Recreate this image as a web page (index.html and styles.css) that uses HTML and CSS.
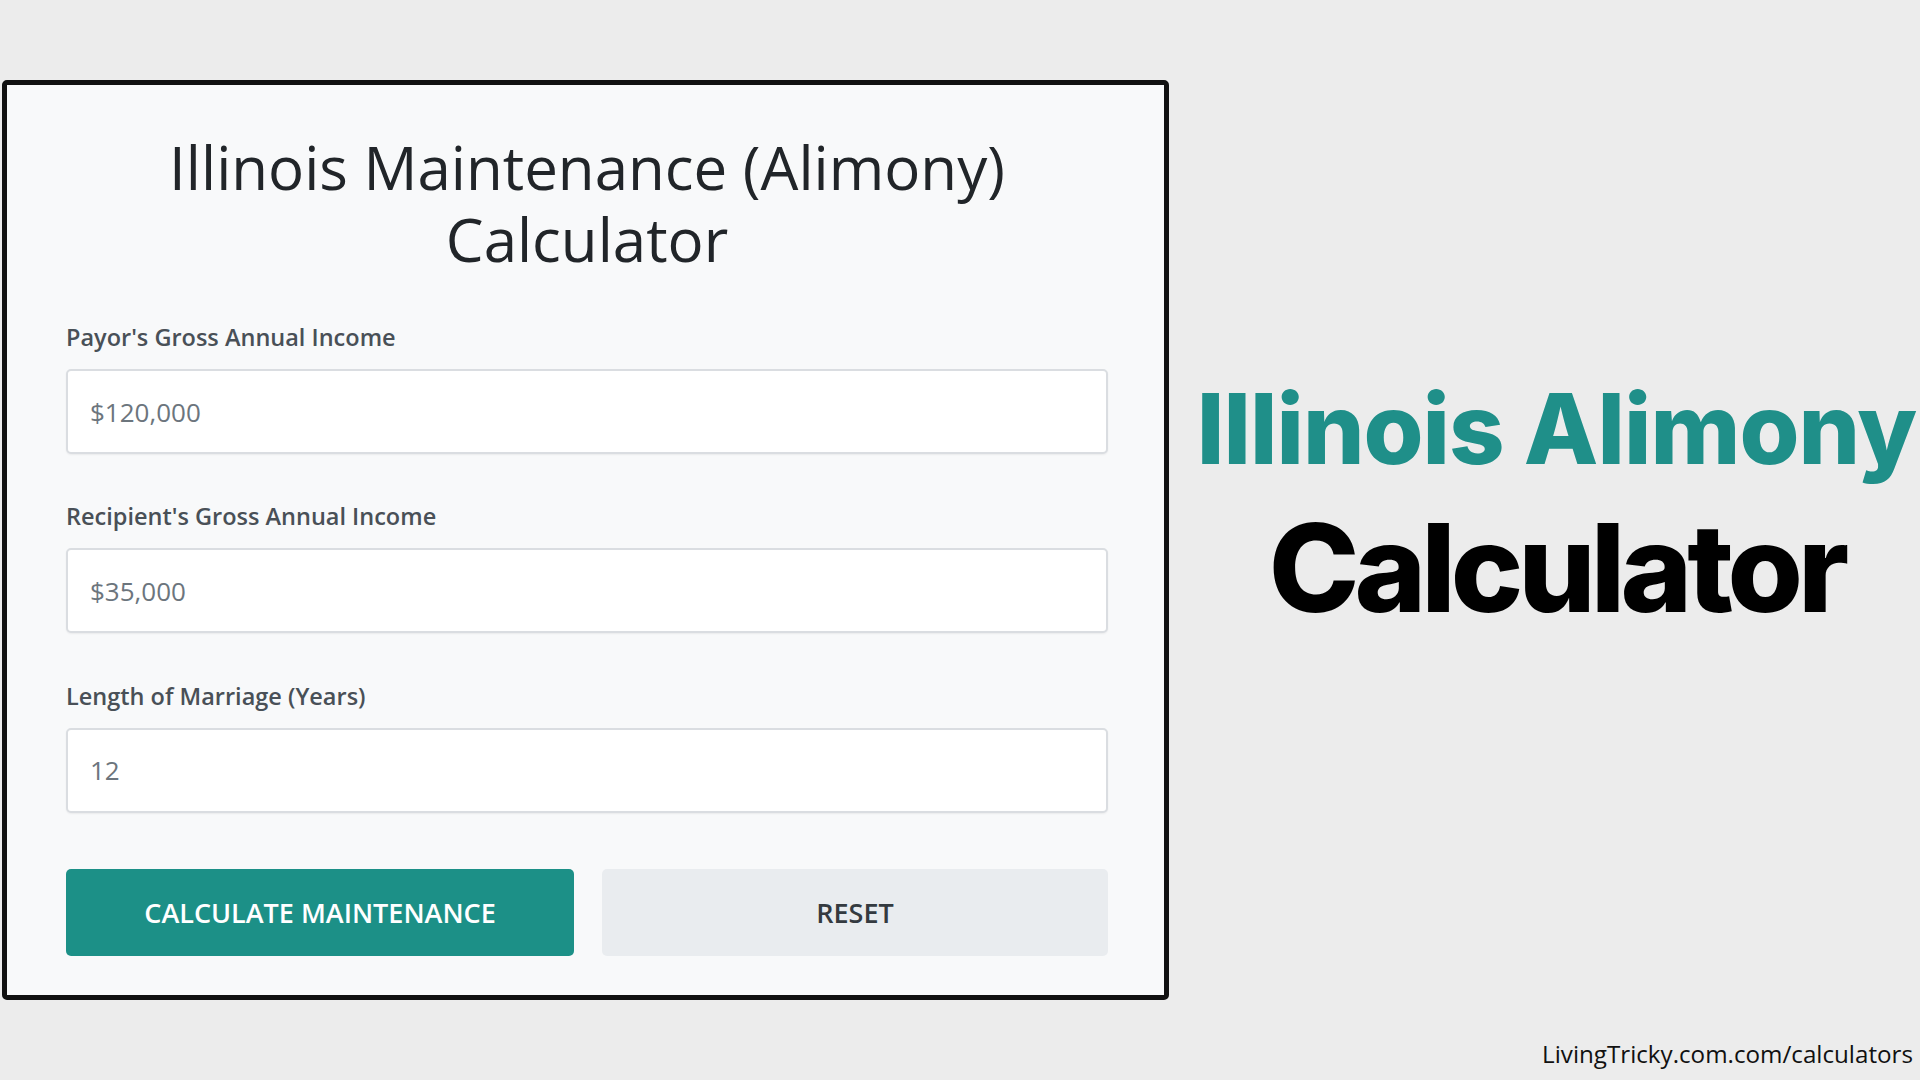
FILE: index.html
```html
<!DOCTYPE html>
<html lang="en">
<head>
<meta charset="utf-8">
<title>Illinois Alimony Calculator</title>
<link rel="stylesheet" href="styles.css">
</head>
<body>
<div class="page">
  <div class="main">
    <section class="card">
      <h1 class="card-title">Illinois Maintenance (Alimony) Calculator</h1>
      <div class="field">
        <label class="field-label" for="payor">Payor's Gross Annual Income</label>
        <input class="field-input" id="payor" type="text" placeholder="$120,000">
      </div>
      <div class="field">
        <label class="field-label" for="recipient">Recipient's Gross Annual Income</label>
        <input class="field-input" id="recipient" type="text" placeholder="$35,000">
      </div>
      <div class="field">
        <label class="field-label" for="years">Length of Marriage (Years)</label>
        <input class="field-input" id="years" type="text" placeholder="12">
      </div>
      <div class="actions">
        <button class="btn btn-primary" type="button">Calculate Maintenance</button>
        <button class="btn btn-secondary" type="button">Reset</button>
      </div>
    </section>
    <div class="hero">
      <div class="hero-line1">Illinois Alimony</div>
      <div class="hero-line2">Calculator</div>
    </div>
  </div>
  <div class="footer">LivingTricky.com.com/calculators</div>
</div>
</body>
</html>
```

FILE: styles.css
```css
* { box-sizing: border-box; }

html, body {
  margin: 0;
  padding: 0;
}

body {
  background: #ececec;
  font-family: "Open Sans", "Liberation Sans", sans-serif;
}

.page {
  width: 1920px;
  height: 1080px;
  display: flex;
  flex-direction: column;
}

.main {
  display: flex;
  padding-top: 80px;
  padding-left: 2px;
}

.card {
  width: 1167px;
  height: 920px;
  flex: none;
  border: 5px solid #111;
  border-radius: 5px;
  background: #f8f9fa;
  padding: 46px 56px 0 59px;
}

.card-title {
  margin: 0 0 47px;
  font-size: 60px;
  line-height: 72px;
  font-weight: 500;
  color: #212529;
  text-align: center;
}

.field {
  display: flex;
  flex-direction: column;
  margin-bottom: 47.4px;
}

.field-label {
  font-size: 23.5px;
  line-height: 30px;
  font-weight: 600;
  color: #495057;
  margin-bottom: 17px;
}

.field-input {
  height: 85px;
  width: 100%;
  border: 2px solid #dadde1;
  border-radius: 5px;
  background: #fff;
  padding: 0 22px;
  font-family: "Open Sans", "Liberation Sans", sans-serif;
  font-size: 26px;
  color: #6c757d;
  box-shadow: 0 1px 2px rgba(0,0,0,0.06);
  outline: none;
}

.field-input::placeholder {
  color: #6c757d;
  opacity: 1;
}

.actions {
  display: grid;
  grid-template-columns: 508px 506px;
  column-gap: 28px;
  margin-top: 56px;
}

.btn {
  height: 87px;
  border: none;
  border-radius: 5px;
  font-family: "Open Sans", "Liberation Sans", sans-serif;
  font-size: 27px;
  font-weight: 600;
  text-transform: uppercase;
}

.btn-primary {
  background: #1c9087;
  color: #fff;
}

.btn-secondary {
  background: #e9ecef;
  color: #343a40;
}

.hero {
  flex: 1;
  padding-top: 301px;
  padding-left: 24px;
  text-align: center;
  font-family: "Inter", "Lato", sans-serif;
  font-weight: 800;
}

.hero-line1 {
  font-size: 97px;
  line-height: 95px;
  color: #1f8f89;
  letter-spacing: -1px;
}

.hero-line2 {
  margin-top: 31px;
  font-size: 122px;
  line-height: 122px;
  color: #000;
  letter-spacing: -5px;
}

.footer {
  margin-top: 38px;
  padding-right: 7px;
  text-align: right;
  font-size: 24.2px;
  line-height: 32px;
  color: #111;
}
```
